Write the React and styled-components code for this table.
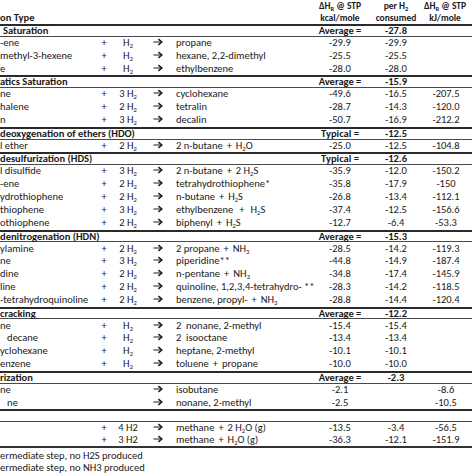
import React from 'react';
import styled, { createGlobalStyle } from 'styled-components';

const GlobalStyle = createGlobalStyle`
  html, body {
    margin: 0;
    padding: 0;
    background: #fff;
    overflow: hidden;
  }
  body {
    font-family: "Carlito", "Lato", "Liberation Sans", sans-serif;
    color: #1a1a1a;
  }
`;

const COLS = '96px 16px 32px 28px 136px 64px 48px 52px';
const ROW_H = '12.85px';

const Table = styled.div`
  width: 472px;
  font-size: 10.5px;
`;

const Row = styled.div`
  display: grid;
  grid-template-columns: ${COLS};
  align-items: center;
  height: ${ROW_H};
  box-sizing: border-box;
  line-height: 1;
  white-space: nowrap;
  border-bottom: ${p => (p.$last ? '2px solid #333' : 'none')};
`;

const HeaderRow = styled(Row)`
  height: 24px;
  align-items: end;
`;

const SectionRow = styled(Row)`
  border-top: 2px solid #2a2a2a;
  border-bottom: 1px solid #4a4a4a;
  font-weight: 700;
`;

const Label = styled.div`
  overflow: hidden;
  padding-left: ${p => p.$pad || 0}px;
`;

const SectionLabel = styled(Label)`
  grid-column: 1 / 6;
  font-weight: 700;
`;

const TypeLabel = styled(SectionLabel)`
  padding-bottom: 1px;
`;

const Center = styled.div`
  text-align: center;
`;

const Product = styled.div`
  padding-left: 4px;
`;

const ColHead = styled.div`
  display: flex;
  flex-direction: column;
  align-items: center;
  font-weight: 700;
  font-size: 9.5px;
  margin-left: ${p => p.$shift || 0}px;
`;

const HeadLine = styled.span`
  display: block;
  height: 11.5px;
  line-height: 11.5px;
`;

const Sub = styled.sub`
  font-size: 6.5px;
  vertical-align: -1.5px;
  line-height: 0;
`;

const Gap = styled.span`
  margin: 0 ${p => p.$w || 4}px;
`;

const Note = styled.div`
  height: ${ROW_H};
  box-sizing: border-box;
  display: flex;
  align-items: center;
  padding-top: 3px;
  font-size: 10.5px;
  line-height: 1;
  white-space: nowrap;
`;

const Arrow = () => (
  <svg width="10" height="8" viewBox="0 0 10 8">
    <path d="M0.5 4 H8.4" stroke="#1a1a1a" strokeWidth="1" fill="none" />
    <path d="M5.4 1.2 L8.8 4 L5.4 6.8" stroke="#1a1a1a" strokeWidth="1.5" fill="none" />
  </svg>
);

const H = (n, s = true) =>
  s ? <>{n ? `${n} ` : ''}H<Sub>2</Sub></> : <>{n} H2</>;

const plus = (a, b, w) => <>{a}<Gap $w={w}>+</Gap>{b}</>;

const sections = [
  {
    label: 'Saturation', pad: 3, kind: 'Average =', value: '-27.8',
    rows: [
      ['-ene', H(), 'propane', '-29.9', '-29.9', ''],
      ['methyl-3-hexene', H(), 'hexane, 2,2-dimethyl', '-25.5', '-25.5', ''],
      ['e', H(), 'ethylbenzene', '-28.0', '-28.0', ''],
    ],
  },
  {
    label: 'atics Saturation', kind: 'Average =', value: '-15.9',
    rows: [
      ['ne', H(3), 'cyclohexane', '-49.6', '-16.5', '-207.5'],
      ['halene', H(2), 'tetralin', '-28.7', '-14.3', '-120.0'],
      ['n', H(3), 'decalin', '-50.7', '-16.9', '-212.2'],
    ],
  },
  {
    label: 'deoxygenation of ethers (HDO)', kind: 'Typical =', value: '-12.5',
    rows: [
      ['l ether', H(2), plus('2 n-butane', <>H<Sub>2</Sub>O</>), '-25.0', '-12.5', '-104.8'],
    ],
  },
  {
    label: 'desulfurization (HDS)', kind: 'Typical =', value: '-12.6',
    rows: [
      ['l disulfide', H(3), plus('2 n-butane', <>2 H<Sub>2</Sub>S</>), '-35.9', '-12.0', '-150.2'],
      ['-ene', H(2), 'tetrahydrothiophene*', '-35.8', '-17.9', '-150'],
      ['ydrothiophene', H(2), plus('n-butane', <>H<Sub>2</Sub>S</>), '-26.8', '-13.4', '-112.1'],
      ['thiophene', H(3), plus('ethylbenzene', <>H<Sub>2</Sub>S</>, 6), '-37.4', '-12.5', '-156.6'],
      ['othiophene', H(2), plus('biphenyl', <>H<Sub>2</Sub>S</>), '-12.7', '-6.4', '-53.3'],
    ],
  },
  {
    label: 'denitrogenation (HDN)', kind: 'Average =', value: '-15.3',
    rows: [
      ['ylamine', H(2), plus('2 propane', <>NH<Sub>3</Sub></>), '-28.5', '-14.2', '-119.3'],
      ['ne', H(3), 'piperidine**', '-44.8', '-14.9', '-187.4'],
      ['dine', H(2), plus('n-pentane', <>NH<Sub>3</Sub></>), '-34.8', '-17.4', '-145.9'],
      ['line', H(2), 'quinoline, 1,2,3,4-tetrahydro- **', '-28.3', '-14.2', '-118.5'],
      ['-tetrahydroquinoline', H(2), plus('benzene, propyl-', <>NH<Sub>3</Sub></>), '-28.8', '-14.4', '-120.4'],
    ],
  },
  {
    label: 'cracking', kind: 'Average =', value: '-12.2',
    rows: [
      ['ne', H(), '2\u00a0 nonane, 2-methyl', '-15.4', '-15.4', ''],
      ['\u00a0\u00a0\u00a0decane', H(), '2\u00a0 isooctane', '-13.4', '-13.4', ''],
      ['yclohexane', H(), 'heptane, 2-methyl', '-10.1', '-10.1', ''],
      ['enzene', H(), plus('toluene', 'propane'), '-10.0', '-10.0', ''],
    ],
  },
  {
    label: 'rization', kind: 'Average =', value: '-2.3',
    rows: [
      ['ne', null, 'isobutane', '-2.1', '', '-8.6'],
      ['\u00a0\u00a0\u00a0ne', null, 'nonane, 2-methyl', '-2.5', '', '-10.5'],
    ],
  },
  {
    label: '', kind: '', value: '',
    rows: [
      ['', H(4, false), plus('methane', <>2 H<Sub>2</Sub>O (g)</>), '-13.5', '-3.4', '-56.5'],
      ['', H(3, false), plus('methane', <>H<Sub>2</Sub>O (g)</>), '-36.3', '-12.1', '-151.9'],
    ],
  },
];

const DataRow = ({ cells, last }) => {
  const [react, h2, prod, kcal, per, kj] = cells;
  return (
    <Row $last={last}>
      <Label>{react}</Label>
      <Center>{h2 ? '+' : ''}</Center>
      <Center>{h2}</Center>
      <Center><Arrow /></Center>
      <Product>{prod}</Product>
      <Center>{kcal}</Center>
      <Center>{per}</Center>
      <Center>{kj}</Center>
    </Row>
  );
};

export default function App() {
  return (
    <>
      <GlobalStyle />
      <Table>
        <HeaderRow>
          <TypeLabel>on Type</TypeLabel>
          <ColHead>
            <HeadLine>ΔH<Sub>R</Sub> @ STP</HeadLine>
            <HeadLine>kcal/mole</HeadLine>
          </ColHead>
          <ColHead>
            <HeadLine>per H<Sub>2</Sub></HeadLine>
            <HeadLine>consumed</HeadLine>
          </ColHead>
          <ColHead $shift={-2}>
            <HeadLine>ΔH<Sub>R</Sub> @ STP</HeadLine>
            <HeadLine>kJ/mole</HeadLine>
          </ColHead>
        </HeaderRow>
        {sections.map((sec, si) => (
          <React.Fragment key={si}>
            <SectionRow>
              <SectionLabel $pad={sec.pad}>{sec.label}</SectionLabel>
              <Center>{sec.kind}</Center>
              <Center>{sec.value}</Center>
              <div />
            </SectionRow>
            {sec.rows.map((r, ri) => (
              <DataRow
                key={ri}
                cells={r}
                last={si === sections.length - 1 && ri === sec.rows.length - 1}
              />
            ))}
          </React.Fragment>
        ))}
        <Note>ermediate step, no H2S produced</Note>
        <Note>ermediate step, no NH3 produced</Note>
      </Table>
    </>
  );
}
